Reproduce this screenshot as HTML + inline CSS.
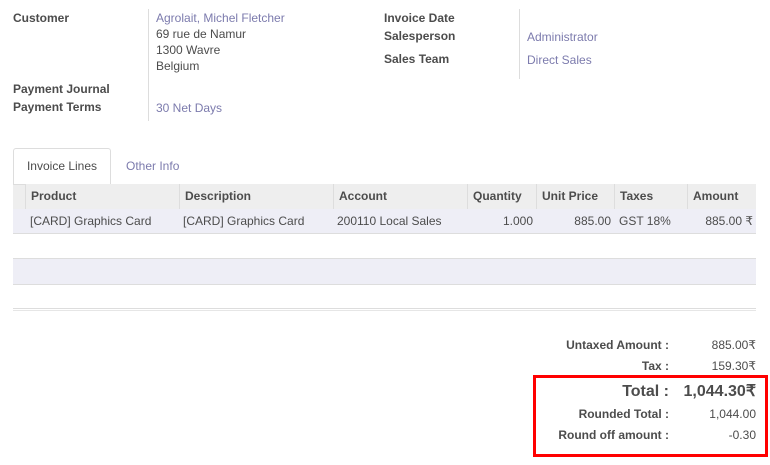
<!DOCTYPE html>
<html><head><style>
body{margin:0;width:770px;height:465px;background:#fff;font-family:"Liberation Sans",sans-serif;font-size:12px;line-height:16px;color:#4c4c4c;position:relative;overflow:hidden}
div,span{position:absolute}
.b{font-weight:bold;color:#4c4c4c}
.l{color:#7c7bad}
.hd{top:184px;height:25px;background:#eee;border-left:1px solid #ddd;line-height:25px;font-weight:bold;padding-left:5px;box-sizing:border-box}
.c{top:209px;height:24px;line-height:24px}
.r{text-align:right}
</style></head><body>
<span class="b" style="left:13px;top:10px">Customer</span>
<div style="left:148px;top:9px;width:1px;height:112px;background:#ddd"></div>
<span class="l" style="left:156px;top:10px">Agrolait, Michel Fletcher</span>
<span style="left:156px;top:26px">69 rue de Namur</span>
<span style="left:156px;top:42px">1300 Wavre</span>
<span style="left:156px;top:58px">Belgium</span>
<span class="b" style="left:13px;top:81px">Payment Journal</span>
<span class="b" style="left:13px;top:99px">Payment Terms</span>
<span class="l" style="left:156px;top:100px">30 Net Days</span>
<span class="b" style="left:384px;top:10px">Invoice Date</span>
<span class="b" style="left:384px;top:28px">Salesperson</span>
<span class="b" style="left:384px;top:51px">Sales Team</span>
<div style="left:519px;top:9px;width:1px;height:70px;background:#ddd"></div>
<span class="l" style="left:527px;top:29px">Administrator</span>
<span class="l" style="left:527px;top:52px">Direct Sales</span>
<div style="left:13px;top:148px;width:96px;height:37px;border:1px solid #ddd;border-bottom:none;border-radius:3px 3px 0 0;background:#fff;line-height:35px;text-align:center">Invoice Lines</div>
<span class="l" style="left:126px;top:158px">Other Info</span>
<div style="left:13px;top:184px;width:743px;height:25px;background:#eee;border-top:1px solid #ddd;box-sizing:border-box"></div>
<div class="hd" style="left:25px;width:154px">Product</div>
<div class="hd" style="left:179px;width:154px">Description</div>
<div class="hd" style="left:333px;width:134px">Account</div>
<div class="hd" style="left:467px;width:69px">Quantity</div>
<div class="hd" style="left:536px;width:78px">Unit Price</div>
<div class="hd" style="left:614px;width:73px">Taxes</div>
<div class="hd" style="left:687px;width:69px">Amount</div>
<div style="left:13px;top:209px;width:743px;height:24px;background:#eeeef6;border-bottom:1px solid #ddd"></div>
<span class="c" style="left:30px">[CARD] Graphics Card</span>
<span class="c" style="left:183px">[CARD] Graphics Card</span>
<span class="c" style="left:337px">200110 Local Sales</span>
<span class="c r" style="left:467px;width:66px">1.000</span>
<span class="c r" style="left:536px;width:75px">885.00</span>
<span class="c" style="left:619px">GST 18%</span>
<span class="c r" style="left:687px;width:66px">885.00 ₹</span>
<div style="left:13px;top:258px;width:743px;height:25px;background:#eeeef6;border-top:1px solid #ddd;border-bottom:1px solid #ddd"></div>
<div style="left:13px;top:308px;width:743px;height:1px;background:#ddd"></div>
<div style="left:13px;top:310px;width:743px;height:1px;background:#e6e6e6"></div>
<span class="b r" style="left:500px;width:169px;top:337px">Untaxed Amount :</span>
<span class="r" style="left:680px;width:76px;top:337px">885.00₹</span>
<span class="b r" style="left:500px;width:169px;top:358px">Tax :</span>
<span class="r" style="left:680px;width:76px;top:358px">159.30₹</span>
<div style="left:553px;top:377px;width:203px;height:1px;background:#ddd"></div>
<span class="b r" style="left:500px;width:169px;top:382px;font-size:16px;line-height:20px">Total :</span>
<span class="b r" style="left:660px;width:96px;top:382px;font-size:16px;line-height:20px">1,044.30₹</span>
<span class="b r" style="left:500px;width:169px;top:406px">Rounded Total :</span>
<span class="r" style="left:680px;width:76px;top:406px">1,044.00</span>
<span class="b r" style="left:500px;width:169px;top:427px">Round off amount :</span>
<span class="r" style="left:680px;width:76px;top:427px">-0.30</span>
<div style="left:533px;top:375px;width:229px;height:76px;border:3px solid #f00"></div>
</body></html>
